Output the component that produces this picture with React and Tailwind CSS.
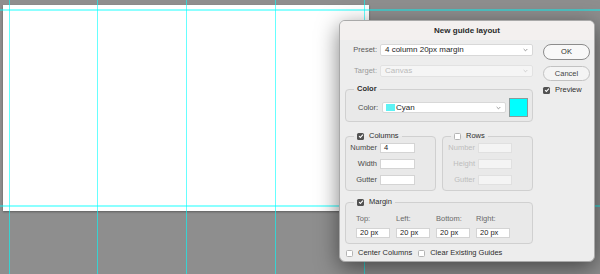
import React from 'react'

const FONT = { fontFamily: '"Liberation Sans", Arial, sans-serif' }

// vertical guide x positions on the document canvas
const V_GUIDES = [9, 97, 186, 275, 364]

function Check({ checked }) {
  if (checked) {
    return (
      <span className="w-[7px] h-[7px] rounded-[1.5px] bg-[#525252] flex items-center justify-center shrink-0">
        <svg viewBox="0 0 8 8" className="w-[6px] h-[6px]">
          <path d="M1.4 4.1 L3.2 5.9 L6.6 2.1" stroke="#fff" strokeWidth="1.4" fill="none" />
        </svg>
      </span>
    )
  }
  return <span className="block w-[7px] h-[7px] rounded-[1.5px] bg-white border border-[#b4b4b4] shrink-0" />
}

function Chevron({ color = '#777' }) {
  return (
    <svg viewBox="0 0 6 4" className="w-[5px] h-[4px] shrink-0">
      <path d="M0.8 0.8 L3 3 L5.2 0.8" stroke={color} strokeWidth="0.9" fill="none" />
    </svg>
  )
}

function Field({ value, disabled, w }) {
  return (
    <div
      className={`h-[10px] border px-[3px] text-[7.5px] leading-[8px] text-[#222] ${
        disabled ? 'bg-[#f4f4f4] border-[#e0e0e0]' : 'bg-white border-[#d4d4d4]'
      } ${w}`}
    >
      {value}
    </div>
  )
}

function Group({ title, check, checked, children, className = '' }) {
  return (
    <fieldset className={`border border-[#d0d0d0] rounded-[4px] bg-[#e9e9e9] ${className}`}>
      <legend className="ml-[8px] px-[3px] leading-[10px]">
        <span className="flex items-center gap-[5px] text-[7.5px] text-[#2e2e2e]">
          {check && <Check checked={checked} />}
          <span className={check ? '' : 'font-bold'}>{title}</span>
        </span>
      </legend>
      {children}
    </fieldset>
  )
}

function LabeledField({ label, value, disabled, labelW, fieldW }) {
  return (
    <div className="flex items-center gap-[3px] h-[10px]">
      <span className={`${labelW} text-right text-[7.5px] ${disabled ? 'text-[#bdbdbd]' : 'text-[#4a4a4a]'}`}>{label}</span>
      <Field value={value} disabled={disabled} w={fieldW} />
    </div>
  )
}

export default function App() {
  return (
    <div className="relative w-[600px] h-[274px] overflow-hidden bg-[#8e8e8e]" style={FONT}>
      {/* document canvas */}
      <div className="absolute left-[3px] top-[5px] w-[366px] h-[206px] bg-white shadow-[0_1px_2px_rgba(0,0,0,0.35)]" />

      {/* guides */}
      {V_GUIDES.map(x => (
        <div key={x} className="absolute top-0 h-[274px] w-[1px] bg-[#00ffff]/60" style={{ left: x }} />
      ))}
      <div className="absolute left-0 top-[9px] w-[600px] h-[2px] bg-[#00ffff]/45" />
      <div className="absolute left-0 top-[205px] w-[600px] h-[2px] bg-[#00ffff]/45" />

      {/* dialog */}
      <div className="absolute left-[339px] top-[20px] w-[256px] h-[242px] rounded-[6px] bg-[#ededed] border border-[#a9a9a9] shadow-[0_6px_22px_rgba(0,0,0,0.5)] overflow-hidden">
        <div className="h-[19px] flex items-center justify-center bg-[#f3f0ef] text-[8px] font-bold text-[#2a2a2a]">
          New guide layout
        </div>

        <div className="flex pl-[5px] pr-[4px]">
          {/* left column */}
          <div className="w-[188px] flex flex-col pt-[4px]">
            <div className="flex items-center gap-[3px] h-[12px]">
              <span className="w-[32px] text-right text-[7.5px] text-[#5a5a5a]">Preset:</span>
              <div className="flex-1 h-[12px] bg-white rounded-[2px] border border-[#d8d8d8] flex items-center justify-between pl-[4px] pr-[4px] text-[8px] text-[#1e1e1e]">
                <span>4 column 20px margin</span>
                <Chevron />
              </div>
            </div>

            <div className="flex items-center gap-[3px] h-[12px] mt-[9px]">
              <span className="w-[32px] text-right text-[7.5px] text-[#9a9a9a]">Target:</span>
              <div className="flex-1 h-[12px] bg-[#f5f5f5] rounded-[2px] border border-[#e2e2e2] flex items-center justify-between pl-[4px] pr-[4px] text-[8px] text-[#bbb]">
                <span>Canvas</span>
                <Chevron color="#c4c4c4" />
              </div>
            </div>

            <Group title="Color" className="mt-[7px] pb-[4px]">
              <div className="flex items-center pt-[4px]">
                <span className="w-[32px] text-right text-[7.5px] text-[#4a4a4a]">Color:</span>
                <div className="ml-[4px] w-[124px] h-[11px] bg-white rounded-[2px] border border-[#d8d8d8] flex items-center justify-between pl-[3px] pr-[4px] text-[8px] text-[#1e1e1e]">
                  <span className="flex items-center">
                    <span className="w-[9px] h-[7px] bg-[#5ef2f4] mr-[1px]" />
                    Cyan
                  </span>
                  <Chevron />
                </div>
                <div className="ml-[3px] w-[19px] h-[19px] bg-[#00ffff] border border-[#8a9a9a]" />
              </div>
            </Group>

            <div className="flex gap-[6px] mt-[9px]">
              <Group title="Columns" check checked className="w-[91px] pb-[5px]">
                <div className="flex flex-col gap-[6px] pt-[2px]">
                  <LabeledField label="Number" value="4" labelW="w-[31px]" fieldW="w-[35px]" />
                  <LabeledField label="Width" value="" labelW="w-[31px]" fieldW="w-[35px]" />
                  <LabeledField label="Gutter" value="" labelW="w-[31px]" fieldW="w-[35px]" />
                </div>
              </Group>
              <Group title="Rows" check checked={false} className="w-[91px] pb-[5px]">
                <div className="flex flex-col gap-[6px] pt-[2px]">
                  <LabeledField label="Number" value="" disabled labelW="w-[32px]" fieldW="w-[34px]" />
                  <LabeledField label="Height" value="" disabled labelW="w-[32px]" fieldW="w-[34px]" />
                  <LabeledField label="Gutter" value="" disabled labelW="w-[32px]" fieldW="w-[34px]" />
                </div>
              </Group>
            </div>

            <Group title="Margin" check checked className="mt-[6px] pb-[5px]">
              <div className="flex gap-[6px] pl-[10px] pt-[7px]">
                {['Top:', 'Left:', 'Bottom:', 'Right:'].map(l => (
                  <div key={l} className="flex flex-col gap-[4px]">
                    <span className="h-[10px] leading-[10px] text-[7.5px] text-[#6a6a6a]">{l}</span>
                    <Field value="20 px" w="w-[34px]" />
                  </div>
                ))}
              </div>
            </Group>

            <div className="flex items-center h-[10px] mt-[4px] pl-[1px] text-[7.5px] text-[#2e2e2e]">
              <Check checked={false} />
              <span className="ml-[5px]">Center Columns</span>
              <span className="ml-[6px]"><Check checked={false} /></span>
              <span className="ml-[5px]">Clear Existing Guides</span>
            </div>
          </div>

          {/* right column */}
          <div className="w-[47px] ml-[10px] flex flex-col pt-[4px]">
            <div className="h-[16px] rounded-full border border-[#8c8c8c] bg-[#f8f8f8] flex items-center justify-center text-[7.5px] text-[#2e2e2e]">
              OK
            </div>
            <div className="h-[15px] mt-[6px] rounded-full border border-[#c2c2c2] bg-[#f4f4f4] flex items-center justify-center text-[7.5px] text-[#444]">
              Cancel
            </div>
            <div className="h-[10px] mt-[4px] flex items-center gap-[5px] text-[7.5px] text-[#2e2e2e]">
              <Check checked />
              <span>Preview</span>
            </div>
          </div>
        </div>
      </div>
    </div>
  )
}
